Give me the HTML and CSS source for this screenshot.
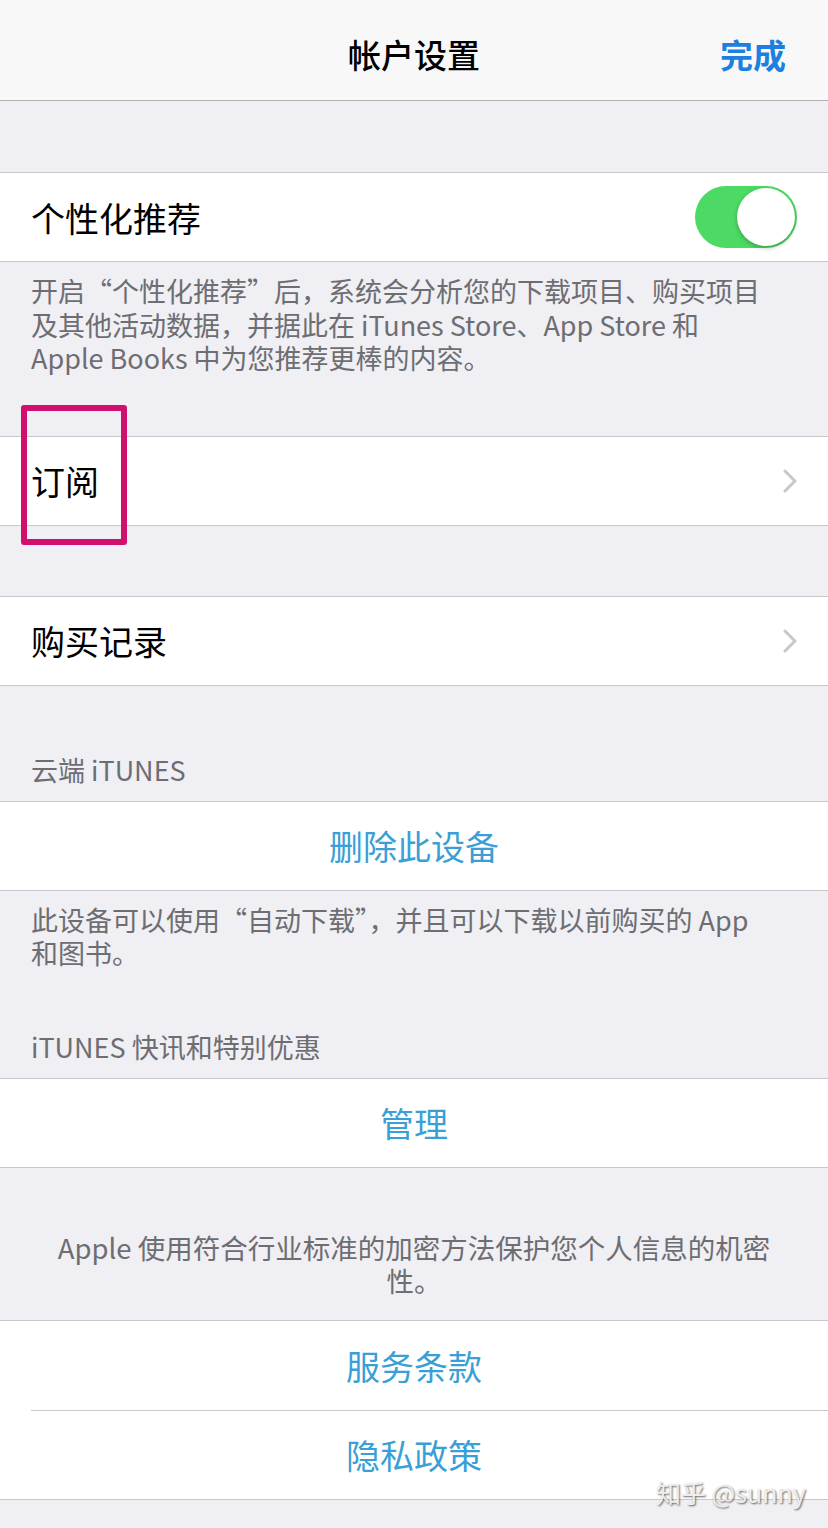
FILE: index.html
```html
<!DOCTYPE html>
<html lang="zh-CN">
<head>
    <meta charset="UTF-8">
    <meta name="viewport" content="width=device-width, initial-scale=1.0">
    <title>帐户设置</title>
    <link rel="stylesheet" href="styles.css">
</head>
<body>
    <div class="nav-bar">
        <div class="nav-title">帐户设置</div>
        <div class="nav-done">完成</div>
    </div>

    <div class="spacer"></div>
    <div class="group">
        <div class="cell">
            <span class="cell-label">个性化推荐</span>
            <div class="switch on"><div class="knob"></div></div>
        </div>
    </div>
    <div class="footer">开启“个性化推荐”后，系统会分析您的下载项目、购买项目<br>及其他活动数据，并据此在 iTunes Store、App Store 和<br>Apple Books 中为您推荐更棒的内容。</div>

    <div class="group gap-top">
        <div class="cell marked">
            <span class="cell-label">订阅</span>
            <svg class="chevron" width="14" height="24" viewBox="0 0 14 24"><polyline points="2,2 12,12 2,22" fill="none" stroke="#c7c7cc" stroke-width="3" stroke-linecap="round" stroke-linejoin="round"/></svg>
            <div class="highlight"></div>
        </div>
    </div>

    <div class="spacer short"></div>
    <div class="group">
        <div class="cell">
            <span class="cell-label">购买记录</span>
            <svg class="chevron" width="14" height="24" viewBox="0 0 14 24"><polyline points="2,2 12,12 2,22" fill="none" stroke="#c7c7cc" stroke-width="3" stroke-linecap="round" stroke-linejoin="round"/></svg>
        </div>
    </div>

    <div class="section-header first">云端 iTUNES</div>
    <div class="group">
        <div class="cell action">删除此设备</div>
    </div>
    <div class="footer">此设备可以使用“自动下载”，并且可以下载以前购买的 App<br>和图书。</div>

    <div class="section-header">iTUNES 快讯和特别优惠</div>
    <div class="group">
        <div class="cell action">管理</div>
    </div>

    <div class="footer center">Apple 使用符合行业标准的加密方法保护您个人信息的机密<br>性。</div>
    <div class="group">
        <div class="cell action tall">服务条款</div>
        <div class="cell action inset">隐私政策</div>
    </div>

    <div class="watermark">知乎 @sunny</div>
</body>
</html>
```

FILE: styles.css
```css
body {
    margin: 0;
    background: #efeff4;
    font-family: "Noto Sans CJK SC", "Noto Sans", sans-serif;
    color: #000;
    position: relative;
    height: 1528px;
    overflow: hidden;
}
.nav-bar {
    height: 100px;
    background: #f8f8f8;
    border-bottom: 1px solid #b1b1b4;
    display: flex;
    align-items: center;
    justify-content: center;
    position: relative;
}
.nav-title {
    font-size: 33px;
    font-weight: 500;
    margin-top: 8px;
}
.nav-done {
    position: absolute;
    right: 42px;
    top: 30px;
    font-size: 33px;
    font-weight: 600;
    color: #1d7fe0; /* iOS blue */
}
.spacer {
    height: 71px;
}
.spacer.short {
    height: 70px;
}
.group {
    background: #fff;
    border-top: 1px solid #c8c7cc;
    border-bottom: 1px solid #c8c7cc;
}
.group.gap-top {
    margin-top: 61px;
}
.cell {
    height: 88px;
    display: flex;
    align-items: center;
    justify-content: space-between;
    padding: 0 31px;
    position: relative;
}
.cell.tall {
    height: 89px;
}
.cell.inset {
    border-top: 1px solid #c8c7cc;
    margin-left: 31px;
    padding-left: 0;
}
.cell-label {
    font-size: 34px;
}
.cell.action {
    justify-content: center;
    font-size: 34px;
    color: #3a9fd6;
}
.switch {
    width: 102px;
    height: 62px;
    border-radius: 31px;
    background: #4cd964;
    position: relative;
}
.knob {
    position: absolute;
    top: 2px;
    right: 2px;
    width: 58px;
    height: 58px;
    border-radius: 50%;
    background: #fff;
    box-shadow: 0 2px 4px rgba(0, 0, 0, 0.25);
}
.footer {
    padding: 12px 31px 0;
    font-size: 27px;
    line-height: 33.5px;
    color: #6d6d72;
}
.footer.center {
    text-align: center;
    padding: 63px 31px 22px;
    font-size: 27.5px;
}
.section-header {
    padding: 60px 31px 14px;
    font-size: 27px;
    line-height: 34px;
    color: #6d6d72;
}
.section-header.first {
    padding-top: 67px;
}
/* annotation box drawn over the subscription row */
.highlight {
    position: absolute;
    left: 21px;
    top: -32px;
    width: 106px;
    height: 140px;
    box-sizing: border-box;
    border: 6px solid #d0106c;
    border-radius: 3px;
}
.watermark {
    position: absolute;
    left: 656px;
    top: 1474px;
    font-size: 25px;
    color: #eeeeee;
    text-shadow: 1px 1px 2px rgba(0, 0, 0, 0.6);
}
```
